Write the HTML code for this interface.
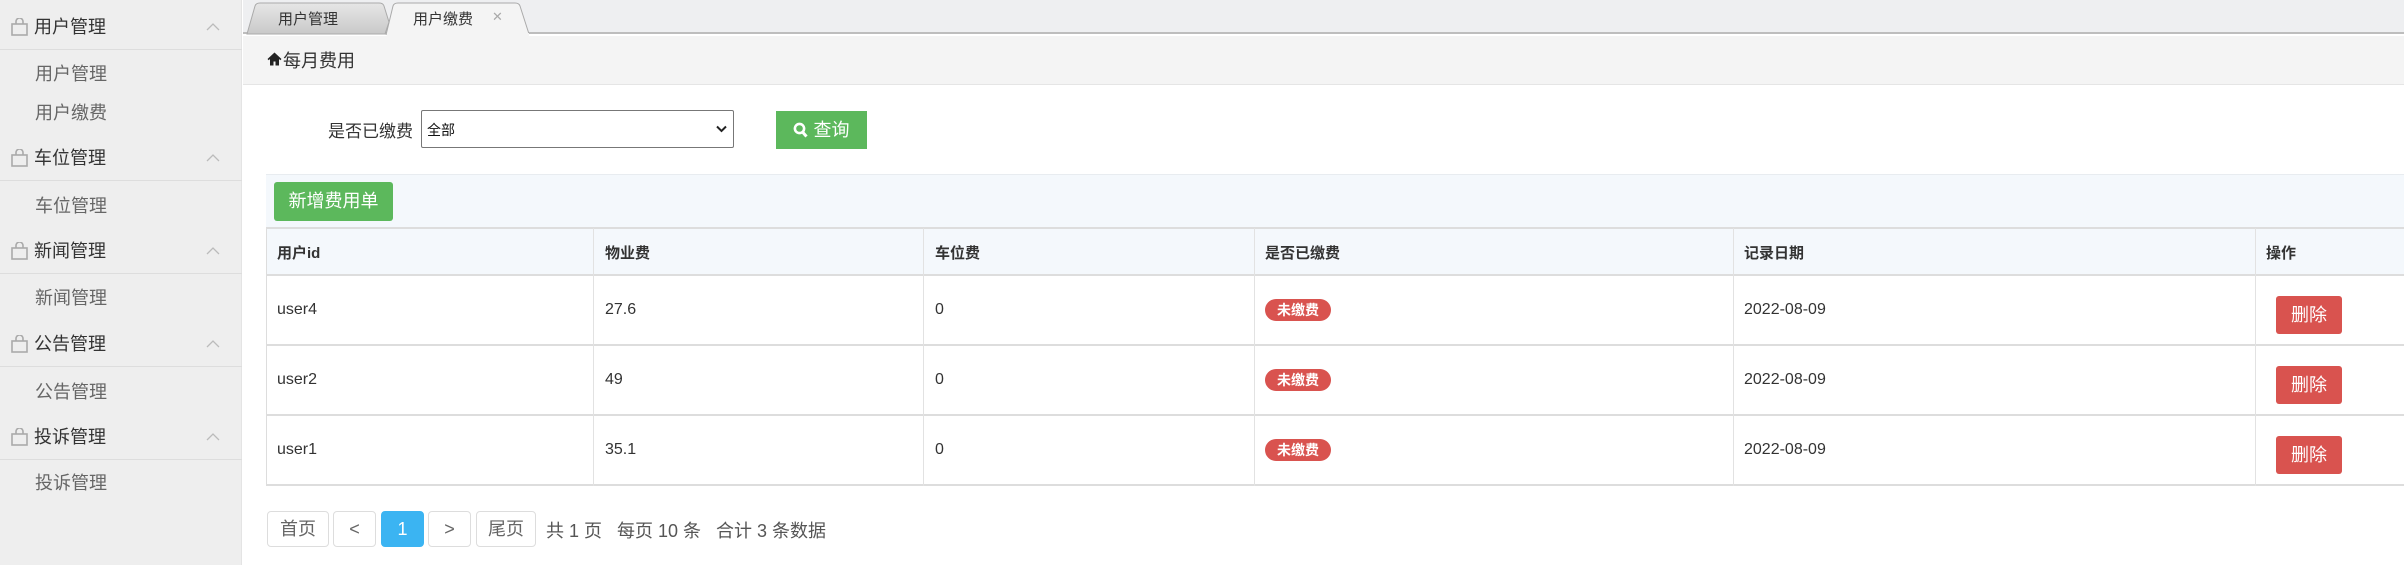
<!DOCTYPE html>
<html><head><meta charset="utf-8"><style>
*{margin:0;padding:0;box-sizing:border-box}
body{width:2404px;height:565px;position:relative;overflow:hidden;background:#fff;font-family:"Liberation Sans","Noto Sans CJK SC",sans-serif;color:#333}
.a{position:absolute;white-space:nowrap}
#side{position:absolute;left:0;top:0;width:242px;height:565px;background:#eee;border-right:1px solid #e4e4e4}
.h{position:absolute;left:0;width:242px;height:46px;border-bottom:1px solid #ddd;font-size:18px;color:#333;line-height:46px;padding-left:34px}
.h svg.bag{position:absolute;left:11px;top:14px}
.h svg.chev{position:absolute;left:206px;top:19px}
.s{position:absolute;left:35px;font-size:18px;color:#666;line-height:24px}
.th,.td{position:absolute;font-size:16px}
.th{font-weight:bold;color:#333;font-size:15px}
.vl{position:absolute;top:228px;width:1px;height:258px;background:#e2e2e2}
.hl{position:absolute;left:266px;width:2138px;height:2px;background:#ddd}
.badge{position:absolute;left:1265px;width:66px;height:22px;background:#d9534f;border-radius:11px;color:#fff;font-size:14px;font-weight:bold;text-align:center;line-height:22px}
.del{position:absolute;left:2276px;width:66px;height:38px;background:#d9534f;border-radius:3px;color:#fff;font-size:18px;text-align:center;line-height:38px}
.pg{position:absolute;top:511px;height:36px;border:1px solid #ddd;border-radius:4px;background:#fff;color:#666;font-size:18px;text-align:center;line-height:34px}
</style></head><body>
<div id="side">
 <div class="h" style="top:4px"><svg class="bag" width="17" height="18" viewBox="0 0 17 18"><rect x="1" y="6" width="15" height="11" fill="none" stroke="#aaa" stroke-width="1.6"/><path d="M5 6V3.5a3.5 3.5 0 0 1 7 0V6" fill="none" stroke="#aaa" stroke-width="1.6"/></svg>用户管理<svg class="chev" width="14" height="8"><path d="M1 7l6-6 6 6" fill="none" stroke="#bbb" stroke-width="1.3"/></svg></div>
 <div class="s" style="top:62px">用户管理</div>
 <div class="s" style="top:101px">用户缴费</div>
 <div class="h" style="top:135px"><svg class="bag" width="17" height="18" viewBox="0 0 17 18"><rect x="1" y="6" width="15" height="11" fill="none" stroke="#aaa" stroke-width="1.6"/><path d="M5 6V3.5a3.5 3.5 0 0 1 7 0V6" fill="none" stroke="#aaa" stroke-width="1.6"/></svg>车位管理<svg class="chev" width="14" height="8"><path d="M1 7l6-6 6 6" fill="none" stroke="#bbb" stroke-width="1.3"/></svg></div>
 <div class="s" style="top:194px">车位管理</div>
 <div class="h" style="top:228px"><svg class="bag" width="17" height="18" viewBox="0 0 17 18"><rect x="1" y="6" width="15" height="11" fill="none" stroke="#aaa" stroke-width="1.6"/><path d="M5 6V3.5a3.5 3.5 0 0 1 7 0V6" fill="none" stroke="#aaa" stroke-width="1.6"/></svg>新闻管理<svg class="chev" width="14" height="8"><path d="M1 7l6-6 6 6" fill="none" stroke="#bbb" stroke-width="1.3"/></svg></div>
 <div class="s" style="top:286px">新闻管理</div>
 <div class="h" style="top:321px"><svg class="bag" width="17" height="18" viewBox="0 0 17 18"><rect x="1" y="6" width="15" height="11" fill="none" stroke="#aaa" stroke-width="1.6"/><path d="M5 6V3.5a3.5 3.5 0 0 1 7 0V6" fill="none" stroke="#aaa" stroke-width="1.6"/></svg>公告管理<svg class="chev" width="14" height="8"><path d="M1 7l6-6 6 6" fill="none" stroke="#bbb" stroke-width="1.3"/></svg></div>
 <div class="s" style="top:380px">公告管理</div>
 <div class="h" style="top:414px"><svg class="bag" width="17" height="18" viewBox="0 0 17 18"><rect x="1" y="6" width="15" height="11" fill="none" stroke="#aaa" stroke-width="1.6"/><path d="M5 6V3.5a3.5 3.5 0 0 1 7 0V6" fill="none" stroke="#aaa" stroke-width="1.6"/></svg>投诉管理<svg class="chev" width="14" height="8"><path d="M1 7l6-6 6 6" fill="none" stroke="#bbb" stroke-width="1.3"/></svg></div>
 <div class="s" style="top:471px">投诉管理</div>
</div>

<div class="a" style="left:243px;top:0;width:2161px;height:34px;background:#eeeff1;border-bottom:2px solid #bdbdbd"></div>
<svg class="a" style="left:243px;top:0" width="300" height="36">
 <defs><linearGradient id="g" x1="0" y1="0" x2="0" y2="1"><stop offset="0" stop-color="#e6e6e6"/><stop offset="1" stop-color="#c9c9c9"/></linearGradient></defs>
 <path d="M4 34 L12 6 Q13 3 17 3 L136 3 Q140 3 141 6 L146 22 L142 34 Z" fill="url(#g)" stroke="#aaa" stroke-width="1"/>
 <path d="M143 35 L150 6 Q151 3 155 3 L272 3 Q276 3 277 6 L286 34" fill="#f4f4f4" stroke="#aaa" stroke-width="1"/>
 <rect x="144" y="33" width="142" height="4" fill="#f4f4f4"/>
</svg>
<div class="a" style="left:278px;top:8px;font-size:15px;color:#333">用户管理</div>
<div class="a" style="left:413px;top:8px;font-size:15px;color:#333">用户缴费</div>
<div class="a" style="left:492px;top:9px;font-size:13px;color:#aaa">✕</div>

<div class="a" style="left:243px;top:36px;width:2161px;height:49px;background:#f4f4f4;border-bottom:1px solid #e5e5e5"></div>
<svg class="a" style="left:267px;top:52px" width="15" height="14" viewBox="0 0 15 14"><path d="M7.5 0.5L0.5 7l1.2 1.2L3 7v6.5h3.5V9.5h2v4H12V7l1.3 1.2L14.5 7 7.5 0.5z" fill="#222"/></svg>
<div class="a" style="left:283px;top:47px;font-size:18px;color:#333">每月费用</div>

<div class="a" style="left:328px;top:117px;font-size:17px;color:#333">是否已缴费</div>
<div class="a" style="left:421px;top:110px;width:313px;height:38px;border:1px solid #777;border-radius:2px;background:#fff"></div>
<div class="a" style="left:427px;top:120px;font-size:14px;color:#111">全部</div>
<svg class="a" style="left:716px;top:125px" width="11" height="8"><path d="M1 1.5l4.5 4.5 4.5-4.5" fill="none" stroke="#222" stroke-width="2"/></svg>
<div class="a" style="left:776px;top:111px;width:91px;height:38px;background:#5cb85c;color:#fff;font-size:18px;line-height:38px;text-align:center"><svg width="15" height="16" viewBox="0 0 15 16" style="vertical-align:-2px"><circle cx="6.5" cy="6.5" r="4.6" fill="none" stroke="#fff" stroke-width="2.6"/><path d="M9.5 10l4 4.5" stroke="#fff" stroke-width="3"/></svg> 查询</div>

<div class="a" style="left:266px;top:174px;width:2138px;height:54px;background:#f4f8fc;border-top:1px solid #e8ecf0"></div>
<div class="a" style="left:274px;top:182px;width:119px;height:39px;background:#5cb85c;border-radius:3px;color:#fff;font-size:18px;line-height:39px;text-align:center">新增费用单</div>

<div class="a" style="left:266px;top:228px;width:2138px;height:47px;background:#f4f8fc"></div>
<div class="hl" style="top:227px"></div>
<div class="hl" style="top:274px"></div>
<div class="hl" style="top:344px"></div>
<div class="hl" style="top:414px"></div>
<div class="hl" style="top:484px"></div>
<div class="vl" style="left:266px;background:#ddd"></div>
<div class="vl" style="left:593px"></div>
<div class="vl" style="left:923px"></div>
<div class="vl" style="left:1254px"></div>
<div class="vl" style="left:1733px"></div>
<div class="vl" style="left:2255px"></div>

<div class="th" style="left:277px;top:242px">用户id</div>
<div class="th" style="left:605px;top:242px">物业费</div>
<div class="th" style="left:935px;top:242px">车位费</div>
<div class="th" style="left:1265px;top:242px">是否已缴费</div>
<div class="th" style="left:1744px;top:242px">记录日期</div>
<div class="th" style="left:2266px;top:242px">操作</div>

<div class="td" style="left:277px;top:301px">user4</div><div class="td" style="left:605px;top:301px">27.6</div><div class="td" style="left:935px;top:301px">0</div><div class="badge" style="top:299px">未缴费</div><div class="td" style="left:1744px;top:301px">2022-08-09</div><div class="del" style="top:296px">删除</div>
<div class="td" style="left:277px;top:371px">user2</div><div class="td" style="left:605px;top:371px">49</div><div class="td" style="left:935px;top:371px">0</div><div class="badge" style="top:369px">未缴费</div><div class="td" style="left:1744px;top:371px">2022-08-09</div><div class="del" style="top:366px">删除</div>
<div class="td" style="left:277px;top:441px">user1</div><div class="td" style="left:605px;top:441px">35.1</div><div class="td" style="left:935px;top:441px">0</div><div class="badge" style="top:439px">未缴费</div><div class="td" style="left:1744px;top:441px">2022-08-09</div><div class="del" style="top:436px">删除</div>

<div class="pg" style="left:267px;width:62px">首页</div>
<div class="pg" style="left:333px;width:43px">&lt;</div>
<div class="pg" style="left:381px;width:43px;background:#3bb4f2;border-color:#3bb4f2;color:#fff">1</div>
<div class="pg" style="left:428px;width:43px">&gt;</div>
<div class="pg" style="left:476px;width:60px">尾页</div>
<div class="a" style="left:546px;top:517px;font-size:18px;color:#555">共 1 页 &nbsp;&nbsp;每页 10 条 &nbsp;&nbsp;合计 3 条数据</div>
</body></html>
